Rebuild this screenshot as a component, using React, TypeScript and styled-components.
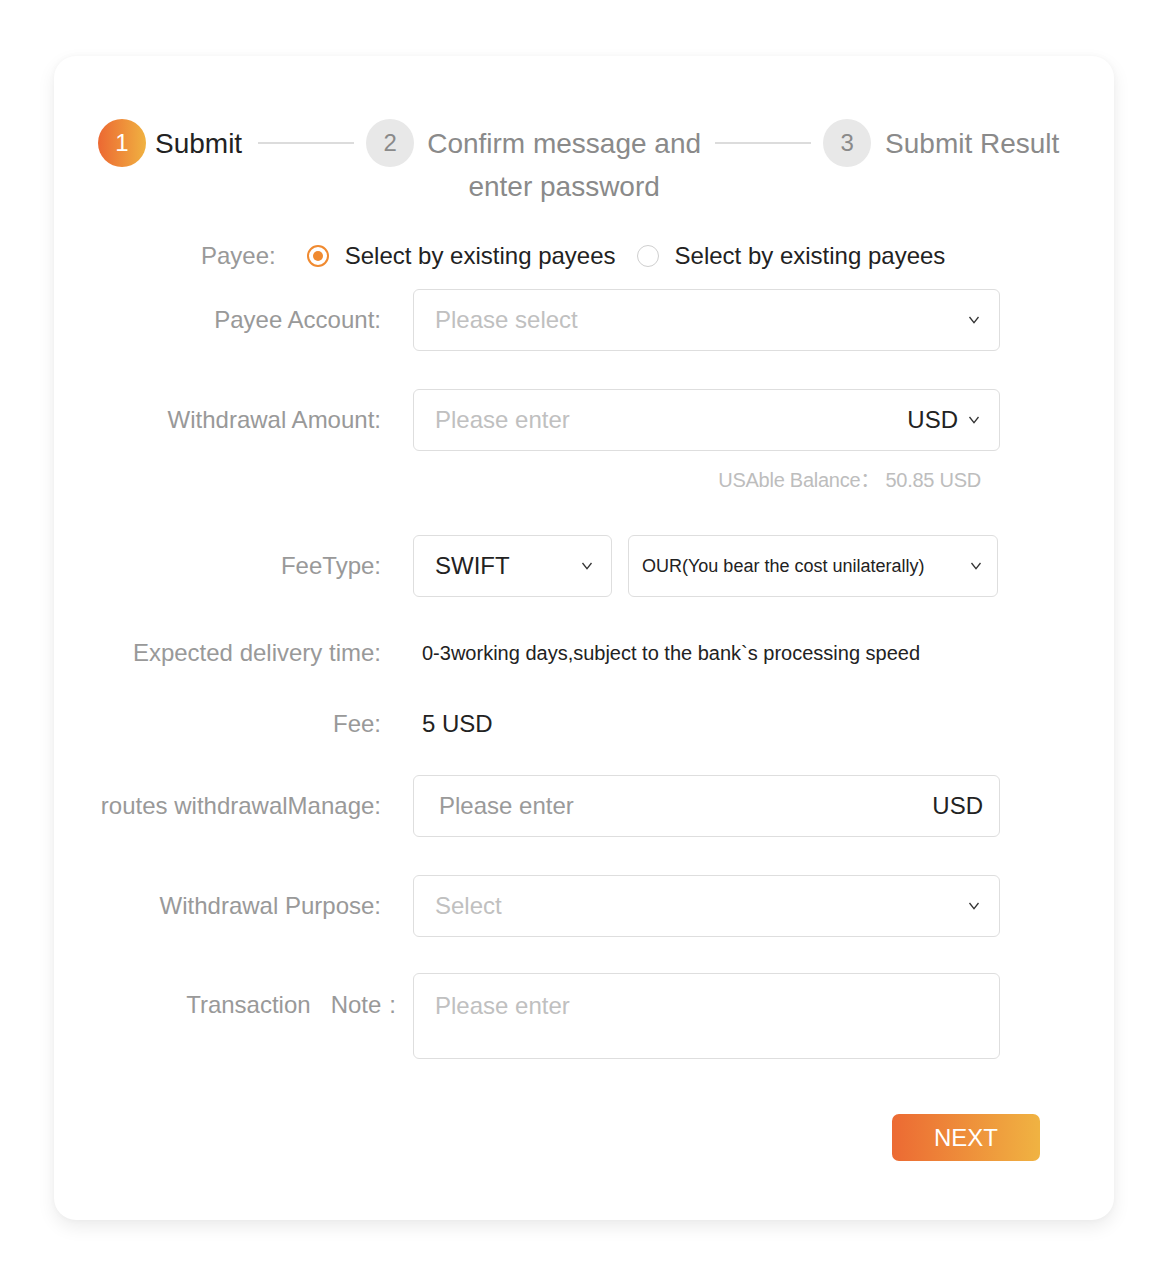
import React from "react";
import styled, { createGlobalStyle } from "styled-components";

const Global = createGlobalStyle`
  html, body { margin: 0; padding: 0; background: #ffffff; }
  body { font-family: "Liberation Sans", Arial, "Noto Sans CJK SC", sans-serif; }
  * { box-sizing: border-box; }
`;

const Page = styled.div`
  padding: 56px 54px 54px;
`;

const Card = styled.div`
  width: 1060px;
  background: #fff;
  border-radius: 22px;
  box-shadow: 0 7px 18px rgba(0, 0, 0, 0.08), 0 0 6px rgba(0, 0, 0, 0.03);
  padding: 63px 44px 59px;
`;

const Stepper = styled.div`
  display: flex;
  align-items: flex-start;
`;

const StepCircle = styled.div<{ $active?: boolean }>`
  width: 48px;
  height: 48px;
  flex: none;
  border-radius: 50%;
  display: flex;
  align-items: center;
  justify-content: center;
  font-size: 24px;
  color: ${(p) => (p.$active ? "#fff" : "#8a8a8a")};
  background: ${(p) =>
    p.$active ? "linear-gradient(90deg, #ec6832 0%, #f0b241 100%)" : "#e8e8e8"};
`;

const StepLabel = styled.div<{ $active?: boolean; $gap?: number }>`
  margin-left: ${(p) => p.$gap ?? 10}px;
  margin-top: 3px;
  font-size: 28px;
  line-height: 43px;
  text-align: center;
  white-space: nowrap;
  color: ${(p) => (p.$active ? "#222" : "#8a8a8a")};
`;

const Connector = styled.div<{ $ml?: number }>`
  width: 96px;
  height: 2px;
  flex: none;
  background: #dcdcdc;
  margin: 23px 12px 0 ${(p) => p.$ml ?? 16}px;
`;

const Form = styled.div`
  display: flex;
  flex-direction: column;
`;

const PayeeRow = styled.div`
  margin-top: 32px;
  height: 32px;
  display: flex;
  align-items: center;
  padding-left: 103px;
`;

const PayeeLabel = styled.span`
  font-size: 24px;
  color: #999;
  margin-right: 31px;
`;

const RadioOption = styled.label`
  display: flex;
  align-items: center;
  font-size: 24px;
  color: #222;
  margin-right: 21px;
`;

const RadioDot = styled.span<{ $checked?: boolean }>`
  width: 22px;
  height: 22px;
  border-radius: 50%;
  margin-right: 16px;
  flex: none;
  display: flex;
  align-items: center;
  justify-content: center;
  border: ${(p) => (p.$checked ? "2px solid #f08a30" : "1.5px solid #cfcfcf")};
  &::after {
    content: "";
    display: ${(p) => (p.$checked ? "block" : "none")};
    width: 10px;
    height: 10px;
    border-radius: 50%;
    background: #f08a30;
  }
`;

const Row = styled.div<{ $mt: number; $top?: boolean }>`
  margin-top: ${(p) => p.$mt}px;
  display: grid;
  grid-template-columns: 283px 587px;
  column-gap: 32px;
  align-items: ${(p) => (p.$top ? "start" : "center")};
`;

const Label = styled.div<{ $offset?: number }>`
  font-size: 24px;
  line-height: 30px;
  color: #999;
  text-align: right;
  white-space: nowrap;
  margin-top: ${(p) => p.$offset ?? 0}px;
`;

const OverColon = styled.span`
  margin-left: 8px;
  margin-right: -15px;
`;

const Field = styled.div<{ $pl?: number; $pr?: number }>`
  height: 62px;
  border: 1px solid #dedede;
  border-radius: 6px;
  background: #fff;
  display: flex;
  align-items: center;
  padding: 0 ${(p) => p.$pr ?? 19}px 0 ${(p) => p.$pl ?? 21}px;
  font-size: 24px;
`;

const TextArea = styled.div`
  height: 86px;
  border: 1px solid #dedede;
  border-radius: 6px;
  padding: 17px 21px;
  font-size: 24px;
  line-height: 30px;
  color: #c0c0c0;
`;

const Placeholder = styled.span<{ $dark?: boolean }>`
  flex: 1;
  color: ${(p) => (p.$dark ? "#9a9a9a" : "#c0c0c0")};
`;

const Value = styled.span<{ $size?: number }>`
  flex: 1;
  color: #222;
  font-size: ${(p) => p.$size ?? 24}px;
  white-space: nowrap;
`;

const Unit = styled.span`
  color: #222;
  font-size: 24px;
`;

const FeeGroup = styled.div`
  display: flex;
  gap: 16px;
`;

const FeeBox = styled(Field)<{ $w: number }>`
  width: ${(p) => p.$w}px;
`;

const Balance = styled.div`
  grid-column: 2;
  font-size: 20px;
  line-height: 24px;
  color: #bdbdbd;
  text-align: right;
  padding-right: 19px;
  letter-spacing: -0.25px;
`;

const Plain = styled.div<{ $size: number }>`
  font-size: ${(p) => p.$size}px;
  line-height: 30px;
  color: #222;
  padding-left: 9px;
  white-space: nowrap;
`;

const ButtonRow = styled.div`
  margin-top: 55px;
  display: flex;
  justify-content: flex-end;
  padding-right: 30px;
`;

const NextButton = styled.button`
  width: 148px;
  height: 47px;
  border: none;
  border-radius: 7px;
  background: linear-gradient(90deg, #ec6a33 0%, #f0b342 100%);
  color: #fff;
  font-family: "Liberation Sans", Arial, sans-serif;
  font-size: 24px;
  cursor: pointer;
`;

const ChevronSvg = styled.svg<{ $ml?: number }>`
  flex: none;
  margin-left: ${(p) => p.$ml ?? 0}px;
`;

const Chevron = ({ ml }: { ml?: number }) => (
  <ChevronSvg $ml={ml} width="12" height="8" viewBox="0 0 12 8">
    <polyline points="1.5,1 6,6.6 10.5,1" fill="none" stroke="#333" strokeWidth="1.3" />
  </ChevronSvg>
);

export default function App() {
  return (
    <>
      <Global />
      <Page>
        <Card>
          <Stepper>
            <StepCircle $active>1</StepCircle>
            <StepLabel $active $gap={9}>Submit</StepLabel>
            <Connector />
            <StepCircle>2</StepCircle>
            <StepLabel $gap={13}>
              Confirm message and
              <br />
              enter password
            </StepLabel>
            <Connector $ml={14} />
            <StepCircle>3</StepCircle>
            <StepLabel $gap={14}>Submit Result</StepLabel>
          </Stepper>

          <Form>
            <PayeeRow>
              <PayeeLabel>Payee:</PayeeLabel>
              <RadioOption>
                <RadioDot $checked />
                Select by existing payees
              </RadioOption>
              <RadioOption>
                <RadioDot />
                Select by existing payees
              </RadioOption>
            </PayeeRow>

            <Row $mt={17}>
              <Label>Payee Account:</Label>
              <Field>
                <Placeholder>Please select</Placeholder>
                <Chevron />
              </Field>
            </Row>

            <Row $mt={38}>
              <Label>Withdrawal Amount:</Label>
              <Field>
                <Placeholder>Please enter</Placeholder>
                <Unit>USD</Unit>
                <Chevron ml={10} />
              </Field>
            </Row>

            <Row $mt={17}>
              <Balance>USAble Balance： 50.85 USD</Balance>
            </Row>

            <Row $mt={43}>
              <Label>FeeType:</Label>
              <FeeGroup>
                <FeeBox $w={199} $pr={18}>
                  <Value>SWIFT</Value>
                  <Chevron />
                </FeeBox>
                <FeeBox $w={370} $pl={13} $pr={15}>
                  <Value $size={18}>OUR(You bear the cost unilaterally)</Value>
                  <Chevron />
                </FeeBox>
              </FeeGroup>
            </Row>

            <Row $mt={41}>
              <Label>Expected delivery time:</Label>
              <Plain $size={20}>0-3working days,subject to the bank`s processing speed</Plain>
            </Row>

            <Row $mt={41}>
              <Label>Fee:</Label>
              <Plain $size={24}>5 USD</Plain>
            </Row>

            <Row $mt={36}>
              <Label>routes withdrawalManage:</Label>
              <Field $pl={25} $pr={16}>
                <Placeholder $dark>Please enter</Placeholder>
                <Unit>USD</Unit>
              </Field>
            </Row>

            <Row $mt={38}>
              <Label>Withdrawal Purpose:</Label>
              <Field>
                <Placeholder>Select</Placeholder>
                <Chevron />
              </Field>
            </Row>

            <Row $mt={36} $top>
              <Label $offset={17}>
                Transaction&nbsp;&nbsp;&nbsp;Note<OverColon>:</OverColon>
              </Label>
              <TextArea>Please enter</TextArea>
            </Row>

            <ButtonRow>
              <NextButton>NEXT</NextButton>
            </ButtonRow>
          </Form>
        </Card>
      </Page>
    </>
  );
}
